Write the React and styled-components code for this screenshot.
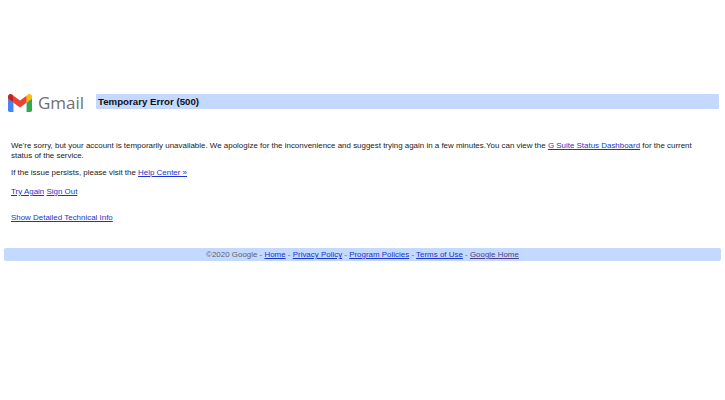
import React from 'react';
import styled, { createGlobalStyle } from 'styled-components';

const GlobalStyle = createGlobalStyle`
  html, body {
    margin: 0;
    padding: 0;
    background: #FFFFFF;
  }

  body {
    font-family: 'Liberation Sans', Arial, sans-serif;
    font-size: 7.95px;
    color: #222222;
  }
`;

const Page = styled.div`
  width: 725px;
  height: 400px;
  padding: 93px 4px 0;
  box-sizing: border-box;
  overflow: hidden;
`;

const Header = styled.header`
  display: flex;
  align-items: flex-start;
  padding-left: 4px;
  margin-right: 2px;
`;

const Logo = styled.div`
  display: flex;
  align-items: center;
  width: 88px;
  height: 20px;
  flex-shrink: 0;
`;

const LogoText = styled.span`
  margin-left: 6px;
  font-family: 'Open Sans', sans-serif;
  font-size: 17px;
  line-height: 20px;
  color: #6F6F6F;
`;

const TitleBar = styled.h1`
  flex: 1;
  margin: 1px 0 0;
  padding-left: 2px;
  height: 15px;
  line-height: 15px;
  background: #C3D9FF;
  border-radius: 1px;
  font-size: 9.7px;
  font-weight: bold;
  color: #111111;
`;

const Content = styled.main`
  padding: 28px 14px 0 7px;
`;

const Paragraph = styled.p`
  margin: 0 0 ${(p) => p.$after}px;
  line-height: 10px;
`;

const Link = styled.a`
  color: ${(p) => (p.$visited ? '#4A3F85' : '#1A34D0')};
  text-decoration: underline;
`;

const Footer = styled.footer`
  margin-top: 25px;
  height: 13px;
  line-height: 13px;
  background: #C3D9FF;
  border-radius: 2px;
  text-align: center;
  color: #5F6368;
`;

const GmailMark = () => (
  <svg width="24" height="18" viewBox="0 0 256 193" preserveAspectRatio="none">
    <path fill="#4285F4" d="M58.182 192.05V93.14L27.507 65.077 0 49.504v125.091c0 9.658 7.825 17.455 17.455 17.455h40.727Z" />
    <path fill="#34A853" d="M197.818 192.05h40.727c9.659 0 17.455-7.826 17.455-17.455V49.505l-31.156 17.837-27.026 25.798v98.91Z" />
    <path fill="#EA4335" d="m58.182 93.14-4.174-38.647 4.174-36.989L128 69.868l69.818-52.364 4.669 34.992-4.669 40.644L128 145.504z" />
    <path fill="#FBBC04" d="M197.818 17.504V93.14L256 49.504V26.231c0-21.585-24.64-33.89-41.89-20.945l-16.292 12.218Z" />
    <path fill="#C5221F" d="M0 49.504l26.759 20.07L58.182 93.14V17.504L41.89 5.286C24.61-7.66 0 4.646 0 26.23v23.273Z" />
  </svg>
);

export default function App() {
  return (
    <>
      <GlobalStyle />
      <Page>
        <Header>
          <Logo>
            <GmailMark />
            <LogoText>Gmail</LogoText>
          </Logo>
          <TitleBar>Temporary Error (500)</TitleBar>
        </Header>
        <Content>
          <Paragraph $after={7}>
            We're sorry, but your account is temporarily unavailable. We apologize for the inconvenience and suggest trying again in a few minutes.You can view the <Link href="#">G Suite Status Dashboard</Link> for the current status of the service.
          </Paragraph>
          <Paragraph $after={9}>
            If the issue persists, please visit the <Link href="#">Help Center »</Link>
          </Paragraph>
          <Paragraph $after={16}>
            <Link href="#">Try Again</Link> <Link href="#">Sign Out</Link>
          </Paragraph>
          <Paragraph $after={8}>
            <Link href="#">Show Detailed Technical Info</Link>
          </Paragraph>
        </Content>
        <Footer>
          ©2020 Google - <Link href="#">Home</Link> - <Link href="#">Privacy Policy</Link> - <Link href="#">Program Policies</Link> - <Link href="#">Terms of Use</Link> - <Link href="#" $visited>Google Home</Link>
        </Footer>
      </Page>
    </>
  );
}
